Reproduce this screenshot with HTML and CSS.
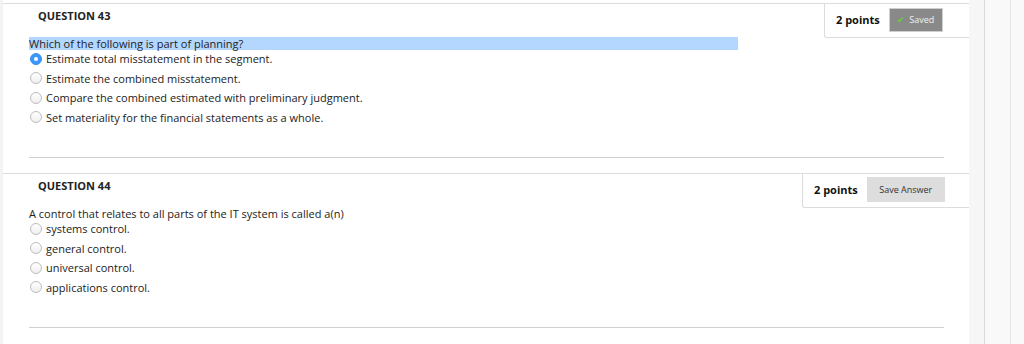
FILE: index.html
```html
<!DOCTYPE html>
<html>
<head>
<meta charset="utf-8">
<link rel="stylesheet" href="styles.css">
</head>
<body>
<div class="page">
  <div class="left-strip"></div>
  <main class="main">
    <section class="question">
      <h2 class="q-title">QUESTION 43</h2>
      <div class="points-box">
        <span class="points">2 points</span>
        <span class="btn btn-saved"><span class="check">✔</span>Saved</span>
      </div>
      <div class="q-text selected">Which of the following is part of planning?</div>
      <ul class="options">
        <li class="option"><span class="radio checked"></span>Estimate total misstatement in the segment.</li>
        <li class="option"><span class="radio"></span>Estimate the combined misstatement.</li>
        <li class="option"><span class="radio"></span>Compare the combined estimated with preliminary judgment.</li>
        <li class="option"><span class="radio"></span>Set materiality for the financial statements as a whole.</li>
      </ul>
      <hr class="sep">
    </section>
    <section class="question">
      <h2 class="q-title">QUESTION 44</h2>
      <div class="points-box wide">
        <span class="points">2 points</span>
        <span class="btn btn-save">Save Answer</span>
      </div>
      <div class="q-text">A control that relates to all parts of the IT system is called a(n)</div>
      <ul class="options">
        <li class="option"><span class="radio"></span>systems control.</li>
        <li class="option"><span class="radio"></span>general control.</li>
        <li class="option"><span class="radio"></span>universal control.</li>
        <li class="option"><span class="radio"></span>applications control.</li>
      </ul>
      <hr class="sep">
    </section>
  </main>
  <aside class="side">
    <div class="side-a"></div>
    <div class="side-b"></div>
    <div class="side-c"></div>
  </aside>
</div>
</body>
</html>
```

FILE: styles.css
```css
* { box-sizing: border-box; }
html, body {
  margin: 0;
  padding: 0;
  background: #fff;
  font-family: "Open Sans", "Liberation Sans", sans-serif;
  color: #222;
  font-size: 11px;
}
.page {
  display: flex;
  height: 344px;
  overflow: hidden;
}
.left-strip {
  width: 3px;
  background: #f3f3f3;
  flex: none;
}
.main {
  width: 966px;
  flex: none;
  padding-top: 3px;
  background: #fff;
}
.question {
  position: relative;
  border-top: 1px solid #dcdcdc;
  padding-bottom: 15px;
}
.q-title {
  margin: 0;
  padding-left: 35px;
  height: 24px;
  line-height: 24px;
  font-size: 11px;
  font-weight: 700;
  color: #222;
}
.points-box {
  position: absolute;
  top: 0;
  right: 0;
  width: 145px;
  height: 34px;
  display: flex;
  align-items: center;
  padding: 0 0 2px 11px;
  border-left: 1px solid #dcdcdc;
  border-bottom: 1px solid #dcdcdc;
  border-bottom-left-radius: 3px;
  background: #fff;
}
.points-box.wide { width: 167px; }
.points {
  font-weight: 700;
  font-size: 11px;
  color: #111;
  margin-right: 9px;
}
.btn {
  display: inline-flex;
  align-items: center;
  justify-content: center;
  height: 24px;
  font-size: 9px;
}
.btn-saved {
  width: 54px;
  background: #898989;
  border: 1px solid #cfcfcf;
  color: #f2f2f2;
}
.check {
  color: #5fd13a;
  font-size: 9px;
  margin-right: 4px;
}
.btn-save {
  width: 78px;
  height: 25px;
  background: #dddddd;
  color: #333;
}
.q-text {
  margin: 9px 0 0 26px;
  width: 709px;
  height: 13px;
  line-height: 13px;
  font-size: 11px;
  color: #222;
}
.q-text.selected { background: #b3d7ff; }
.options {
  list-style: none;
  margin: -1px 0 0 0;
  padding: 0 0 0 27px;
}
.option {
  display: flex;
  align-items: center;
  height: 19.5px;
  font-size: 11px;
  color: #222;
}
.radio {
  width: 12px;
  height: 12px;
  border-radius: 50%;
  border: 1px solid #bdbdbd;
  background: linear-gradient(#ffffff, #efefef);
  margin-right: 4px;
  flex: none;
  position: relative;
}
.radio.checked {
  background: #3a98fb;
  border-color: #3a8ff0;
}
.radio.checked::after {
  content: "";
  position: absolute;
  left: 3px;
  top: 3px;
  width: 4px;
  height: 4px;
  border-radius: 50%;
  background: #fff;
}
.sep {
  margin: 30px 0 0 26px;
  width: 915px;
  height: 0;
  border: none;
  border-top: 1px solid #cfcfcf;
}
.side {
  flex: 1;
  display: flex;
  background: #f7f7f7;
}
.side-a {
  width: 16px;
  background: #f6f6f6;
  border-right: 1px solid #dadada;
}
.side-b {
  width: 26px;
  background: #f9f9f9;
  border-right: 1px solid #e6e6e6;
}
.side-c {
  flex: 1;
  background: #f9f9f9;
}
```
